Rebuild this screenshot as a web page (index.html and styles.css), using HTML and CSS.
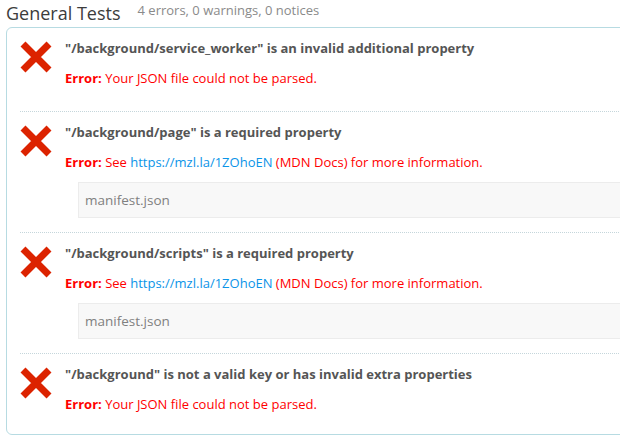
FILE: index.html
```html
<!DOCTYPE html>
<html>
<head>
<meta charset="utf-8">
<link rel="stylesheet" href="styles.css">
</head>
<body>
<div class="page">
  <header class="head">
    <h2 class="head-title">General Tests</h2>
    <span class="head-summary">4 errors, 0 warnings, 0 notices</span>
  </header>
  <section class="panel">
    <div class="item">
      <svg class="icon" viewBox="0 0 32 32"><path d="M3 3 L29 29 M29 3 L3 29" /></svg>
      <div class="body">
        <p class="title">"/background/service_worker" is an invalid additional property</p>
        <p class="error"><b>Error:</b> Your JSON file could not be parsed.</p>
      </div>
    </div>
    <div class="item">
      <svg class="icon" viewBox="0 0 32 32"><path d="M3 3 L29 29 M29 3 L3 29" /></svg>
      <div class="body">
        <p class="title">"/background/page" is a required property</p>
        <p class="error"><b>Error:</b> See <a href="#">https://mzl.la/1ZOhoEN</a> (MDN Docs) for more information.</p>
        <div class="file">manifest.json</div>
      </div>
    </div>
    <div class="item">
      <svg class="icon" viewBox="0 0 32 32"><path d="M3 3 L29 29 M29 3 L3 29" /></svg>
      <div class="body">
        <p class="title">"/background/scripts" is a required property</p>
        <p class="error"><b>Error:</b> See <a href="#">https://mzl.la/1ZOhoEN</a> (MDN Docs) for more information.</p>
        <div class="file">manifest.json</div>
      </div>
    </div>
    <div class="item">
      <svg class="icon" viewBox="0 0 32 32"><path d="M3 3 L29 29 M29 3 L3 29" /></svg>
      <div class="body">
        <p class="title">"/background" is not a valid key or has invalid extra properties</p>
        <p class="error"><b>Error:</b> Your JSON file could not be parsed.</p>
      </div>
    </div>
  </section>
</div>
</body>
</html>
```
FILE: styles.css
```css
html, body {
  margin: 0;
  padding: 0;
  background: #fff;
  overflow: hidden;
}
body {
  font-family: "Open Sans", "Liberation Sans", sans-serif;
  color: #555;
}
.page {
  width: 640px;
  padding: 0 0 0 6px;
}
.head {
  display: flex;
  align-items: flex-start;
  gap: 17px;
  height: 27px;
}
.head-title {
  margin: 0;
  padding-top: 3px;
  font-size: 18px;
  font-weight: normal;
  color: #3c3c3c;
  line-height: 20px;
}
.head-summary {
  font-size: 13px;
  color: #8a8a8a;
  line-height: 18px;
  padding-top: 1px;
}
.panel {
  border: 1px solid #b7dbe2;
  border-radius: 6px;
  padding: 0 0 0 13px;
}
.item {
  display: flex;
  gap: 13px;
  padding: 10px 0 13px 0;
  border-bottom: 1px dotted #c5d6db;
}
.item:last-child {
  border-bottom: none;
  padding-bottom: 10px;
}
.icon {
  width: 32px;
  height: 32px;
  flex: none;
  margin-top: 3px;
}
.icon path {
  stroke: #dc2300;
  stroke-width: 7;
  fill: none;
}
.body {
  flex: 1;
  min-width: 0;
}
.title {
  margin: 0;
  font-size: 13px;
  line-height: 20px;
  font-weight: bold;
  color: #555;
  white-space: nowrap;
}
.error {
  margin: 10px 0 10px;
  font-size: 13px;
  line-height: 20px;
  color: #f00;
  white-space: nowrap;
}
.error b {
  font-weight: bold;
}
.error a {
  color: #0a94e8;
  text-decoration: none;
}
.file {
  margin: 0 0 1px 13px;
  height: 34px;
  line-height: 34px;
  background: #f8f8f8;
  border: 1px solid #ececec;
  border-right: none;
  padding-left: 6px;
  font-size: 13.5px;
  color: #808080;
}
```
